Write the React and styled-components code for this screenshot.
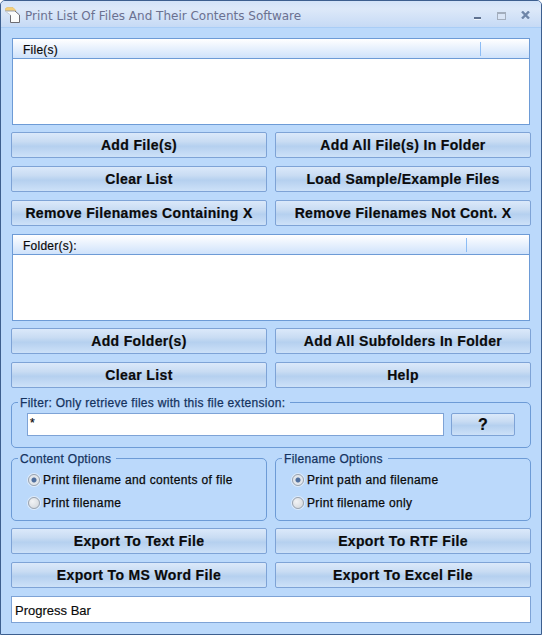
import React from "react";
import styled, { createGlobalStyle } from "styled-components";

const GlobalStyle = createGlobalStyle`
  html, body {
    margin: 0;
    padding: 0;
    width: 542px;
    height: 635px;
    overflow: hidden;
    background: #ffffff;
  }
`;

function DocIcon() {
  return (
    <svg width="18" height="18" viewBox="0 0 18 18">
      <path d="M1.5 4V1.5L3 .5h6L10.5 2l1.5 2z" fill="#f4cf78" stroke="#e2bb62" strokeWidth="0.6" />
      <path d="M1 4h10l4.5 4v7.5H6.5V8z" fill="#fbfcfb" />
      <path d="M11 4l4.5 4v7.5H6.5V8" fill="none" stroke="#6c6c72" strokeWidth="1" />
      <path d="M1 4h10" stroke="#9aa3b2" strokeWidth="1" />
      <path d="M1 4l5.5 4" stroke="#c4ccd8" strokeWidth="1" />
    </svg>
  );
}

function App() {
  return (
    <Window>
      <GlobalStyle />
      <TitleBar>
        <DocIcon />
        <Title>Print List Of Files And Their Contents Software</Title>
        <Controls>
          <MinGlyph />
          <MaxGlyph />
          <CloseGlyph width="9" height="8" viewBox="0 0 9 8">
            <path d="M1 .5 L8 7.5 M8 .5 L1 7.5" stroke="#6f86a8" strokeWidth="2.4" />
          </CloseGlyph>
        </Controls>
      </TitleBar>
      <Body>
        <ListBox>
          <ListHeader>
            <HeaderCell>File(s)</HeaderCell>
            <HeaderEnd />
          </ListHeader>
        </ListBox>
        <ButtonGrid>
          <Button>Add File(s)</Button>
          <Button>Add All File(s) In Folder</Button>
          <Button>Clear List</Button>
          <Button>Load Sample/Example Files</Button>
          <Button>Remove Filenames Containing X</Button>
          <Button>Remove Filenames Not Cont. X</Button>
        </ButtonGrid>
        <ListBox>
          <ListHeader>
            <HeaderCell>Folder(s):</HeaderCell>
            <HeaderEnd $wide />
          </ListHeader>
        </ListBox>
        <ButtonGrid>
          <Button>Add Folder(s)</Button>
          <Button>Add All Subfolders In Folder</Button>
          <Button>Clear List</Button>
          <Button>Help</Button>
        </ButtonGrid>
        <FilterGroup>
          <FilterLegend>Filter: Only retrieve files with this file extension:</FilterLegend>
          <FilterRow>
            <FilterInput>*</FilterInput>
            <SmallButton>?</SmallButton>
          </FilterRow>
        </FilterGroup>
        <OptionsRow>
          <OptionGroup>
            <OptionLegend>Content Options</OptionLegend>
            <RadioRow>
              <Radio $checked />
              Print filename and contents of file
            </RadioRow>
            <RadioRow>
              <Radio />
              Print filename
            </RadioRow>
          </OptionGroup>
          <OptionGroup>
            <OptionLegend>Filename Options</OptionLegend>
            <RadioRow>
              <Radio $checked />
              Print path and filename
            </RadioRow>
            <RadioRow>
              <Radio />
              Print filename only
            </RadioRow>
          </OptionGroup>
        </OptionsRow>
        <ButtonGrid>
          <Button>Export To Text File</Button>
          <Button>Export To RTF File</Button>
          <Button>Export To MS Word File</Button>
          <Button>Export To Excel File</Button>
        </ButtonGrid>
        <ProgressBar>Progress Bar</ProgressBar>
      </Body>
    </Window>
  );
}

export default App;

const Window = styled.div`
  box-sizing: border-box;
  width: 542px;
  height: 635px;
  display: flex;
  flex-direction: column;
  background: #bbd9fb;
  border: 1px solid #3d5f8f;
  border-radius: 5px 5px 0 0;
  font-family: "Liberation Sans", Arial, sans-serif;
  overflow: hidden;
`;
const TitleBar = styled.div`
  box-sizing: border-box;
  height: 27px;
  flex: none;
  display: flex;
  align-items: center;
  padding: 4px 11px 0 3px;
  gap: 3px;
  background: linear-gradient(#d3e3f8 0%, #dde9f9 30%, #c6daf5 100%);
  border-bottom: 1px solid #a9cdf6;
`;
const Title = styled.div`
  font-family: "DejaVu Sans", Verdana, sans-serif;
  font-size: 12px;
  color: #6b7190;
  white-space: nowrap;
`;
const Controls = styled.div`
  margin-left: auto;
  display: flex;
  align-items: center;
  gap: 15px;
`;
const MinGlyph = styled.div`
  width: 7px;
  height: 2px;
  margin: 5px 1px 0 0;
  background: #5f7290;
  border-bottom: 1px solid #eef5fd;
`;
const MaxGlyph = styled.div`
  box-sizing: border-box;
  width: 9px;
  height: 8px;
  border: 1px solid #a3aebd;
  border-top-width: 2px;
  background: #d9e5f6;
`;
const CloseGlyph = styled.svg`
  margin-top: -2px;
`;
const Body = styled.div`
  flex: 1;
  display: flex;
  flex-direction: column;
  padding: 10px 10px 0;
  border-left: 3px solid #c4d9f3;
  border-right: 3px solid #c4d9f3;
  margin: 0 -3px;
  padding-left: 10px;
`;
const ListBox = styled.div`
  box-sizing: border-box;
  height: 87px;
  margin: 0 0 7px 1px;
  width: 518px;
  background: #ffffff;
  border: 1px solid #6d9bd6;
`;
const ListHeader = styled.div`
  display: flex;
  height: 19px;
  background: linear-gradient(#ffffff, #cfe2fb);
  border-bottom: 1px solid #6d9bd6;
`;
const HeaderCell = styled.div`
  flex: 1;
  padding: 5px 0 0 10px;
  font-size: 12px;
  line-height: 12px;
  letter-spacing: 0.25px;
  color: #0a0a0a;
  -webkit-text-stroke: 0.2px #0a0a0a;
`;
const HeaderEnd = styled.div`
  width: ${(p) => (p.$wide ? "62px" : "48px")};
  margin: 3px 0 2px;
  border-left: 1px solid #8cbcf5;
`;
const ButtonGrid = styled.div`
  display: grid;
  grid-template-columns: 256px 256px;
  column-gap: 8px;
  row-gap: 8px;
  margin-bottom: 8px;
`;
const Button = styled.button`
  box-sizing: border-box;
  height: 26px;
  padding: 0;
  border: 1px solid #7ea3d6;
  border-radius: 2px;
  background: linear-gradient(#dbe9fa 0%, #c9dcf3 35%, #b5d0ef 55%, #cde1f8 100%);
  font-family: "Liberation Sans", Arial, sans-serif;
  font-size: 14px;
  font-weight: bold;
  letter-spacing: 0.35px;
  color: #0a0a0a;
  -webkit-text-stroke: 0.2px #0a0a0a;
`;
const GroupFrame = styled.fieldset`
  box-sizing: border-box;
  min-width: 0;
  margin: 0;
  border: 1px solid #6d9bd6;
  border-radius: 5px;
`;
const GroupLegend = styled.legend`
  padding: 1px 5px 0 2px;
  margin-bottom: -1px;
  font-size: 12px;
  line-height: 14px;
  font-weight: normal;
  letter-spacing: 0.3px;
  color: #15335f;
  -webkit-text-stroke: 0.25px #15335f;
`;
const FilterLegend = styled(GroupLegend)`
  margin-left: -9px;
`;
const OptionLegend = styled(GroupLegend)`
  margin-left: -10px;
`;
const FilterGroup = styled(GroupFrame)`
  width: 520px;
  height: 53px;
  margin-top: -1px;
  padding: 0 15px;
`;
const FilterRow = styled.div`
  display: flex;
  gap: 7px;
  margin-top: 4px;
`;
const FilterInput = styled.div`
  box-sizing: border-box;
  width: 417px;
  height: 23px;
  padding: 2px 0 0 2px;
  background: #ffffff;
  border: 1px solid #7ea3d6;
  font-size: 12px;
  color: #0a0a0a;
  -webkit-text-stroke: 0.2px #0a0a0a;
`;
const SmallButton = styled(Button)`
  width: 64px;
  height: 23px;
  font-size: 16px;
`;
const OptionsRow = styled.div`
  display: grid;
  grid-template-columns: 256px 256px;
  column-gap: 8px;
  margin: 3px 0 7px;
`;
const OptionGroup = styled(GroupFrame)`
  height: 70px;
  padding: 3px 0 0 16px;
`;
const RadioRow = styled.div`
  display: flex;
  align-items: center;
  gap: 3px;
  height: 23px;
  font-size: 12px;
  letter-spacing: 0.35px;
  color: #0a0a0a;
  -webkit-text-stroke: 0.25px #0a0a0a;
  white-space: nowrap;
`;
const Radio = styled.span`
  box-sizing: border-box;
  flex: none;
  width: 12px;
  height: 12px;
  border-radius: 50%;
  border: 1px solid #9ca4ae;
  background: ${(p) =>
    p.$checked
      ? "radial-gradient(circle, #4f6f9e 0 2px, #dfe4ea 3px, #e9edf1 100%)"
      : "radial-gradient(circle at 35% 35%, #f2f3f5, #cfd4da)"};
  box-shadow: 0 0 0 1px rgba(236, 242, 250, 0.7);
`;
const ProgressBar = styled.div`
  box-sizing: border-box;
  width: 520px;
  height: 27px;
  padding: 1px 3px 0;
  display: flex;
  align-items: center;
  background: #ffffff;
  border: 1px solid #7ea3d6;
  font-size: 13px;
  color: #0a0a0a;
  -webkit-text-stroke: 0.15px #0a0a0a;
`;
